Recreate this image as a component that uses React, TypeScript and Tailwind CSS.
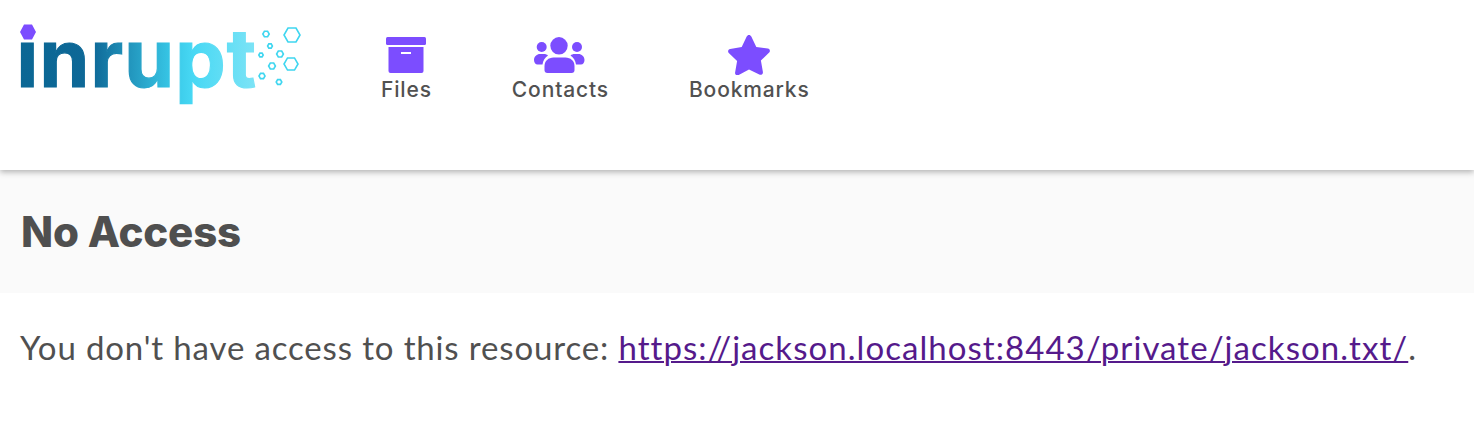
import React from "react";

function Hex({ cx, cy, r, w = 1.6 }: { cx: number; cy: number; r: number; w?: number }) {
  const pts = [0, 1, 2, 3, 4, 5]
    .map((i) => {
      const a = (Math.PI / 3) * i;
      return `${(cx + r * Math.cos(a)).toFixed(2)},${(cy + r * Math.sin(a)).toFixed(2)}`;
    })
    .join(" ");
  return <polygon points={pts} fill="none" stroke="#3fd6f0" strokeWidth={w} />;
}

function Logo() {
  return (
    <svg width="288" height="100" viewBox="-4 -14 288 100" className="block">
      <defs>
        <linearGradient id="g" gradientUnits="userSpaceOnUse" x1="0" y1="0" x2="240" y2="0">
          <stop offset="0" stopColor="#0b6794" />
          <stop offset="0.3" stopColor="#0e6897" />
          <stop offset="0.62" stopColor="#36c4e4" />
          <stop offset="0.72" stopColor="#47d8f4" />
          <stop offset="1" stopColor="#80e4f6" />
        </linearGradient>
      </defs>
      <text
        x="-3.5"
        y="65"
        fill="url(#g)"
        stroke="url(#g)"
        strokeWidth="1.2"
        fontFamily="Inter, 'Liberation Sans', sans-serif"
        fontWeight="700"
        fontSize="80"
        letterSpacing="1.2"
      >
        inrupt
      </text>
      <rect x="-2" y="0" width="20" height="19.5" fill="#fff" />
      <polygon points="0,10 4,2.500 12,2.500 16,10 12,17.500 4,17.500" fill="#7c4dff" />
      <Hex cx={246} cy={12} r={3.2} />
      <Hex cx={272} cy={13} r={8} />
      <Hex cx={250} cy={24} r={2.4} />
      <Hex cx={260} cy={32} r={3.4} />
      <Hex cx={241} cy={33} r={2.2} />
      <Hex cx={271} cy={42} r={7} />
      <Hex cx={252} cy={44} r={3.4} />
      <Hex cx={242} cy={54} r={3} />
      <Hex cx={259} cy={60} r={2.8} />
    </svg>
  );
}

function ArchiveIcon() {
  return (
    <svg width="40" height="36" viewBox="0 0 40 36" className="block">
      <rect x="0" y="0" width="40" height="8" rx="1.5" fill="#7c4dff" />
      <path d="M2.500 10h35v24a2 2 0 0 1-2 2h-31a2 2 0 0 1-2-2z" fill="#7c4dff" />
      <rect x="15" y="15" width="10" height="2" fill="#fff" />
    </svg>
  );
}

function UsersIcon() {
  return (
    <svg width="51" height="36" viewBox="0 0 51 36" className="block" fill="#7c4dff">
      <circle cx="25" cy="8.800" r="8.700" />
      <circle cx="7.700" cy="10" r="5" />
      <circle cx="43" cy="10" r="5" />
      <path d="M10.500 33v-4c0-5 4-8.500 9-8.500h12c5 0 9 3.500 9 8.500v4a3 3 0 0 1-3 3h-24a3 3 0 0 1-3-3z" />
      <path d="M0 23c0-3.500 3-6 6-6h4c1.500 0 3 .5 4 1.500-3 2-5 5-5.500 9H3.500C1.500 27.500 0 25.500 0 23z" />
      <path d="M50.500 23c0-3.500-3-6-6-6h-4c-1.500 0-3 .5-4 1.500 3 2 5 5 5.500 9H47C49 27.500 50.500 25.500 50.500 23z" />
    </svg>
  );
}

function StarIcon() {
  return (
    <svg width="42" height="40" viewBox="0 0 42 40" className="block" fill="#7c4dff">
      <path d="M21 0c1 0 1.800.6 2.300 1.600l5 10.400 11.500 1.600c2 .3 2.800 2.600 1.400 4l-8.300 8 2 11.400c.3 2-1.800 3.500-3.600 2.500L21 34.600l-10.300 5.400c-1.800 1-3.900-.5-3.600-2.500l2-11.400-8.300-8c-1.400-1.400-.6-3.700 1.400-4L13.700 12l5-10.400C19.200.6 20 0 21 0z" />
    </svg>
  );
}

function NavItem({ icon, label }: { icon: React.ReactNode; label: string }) {
  return (
    <a className="flex flex-col items-center">
      <div className="flex h-[40px] items-center pr-[1px]">{icon}</div>
      <span className="mt-[2px] text-[21px] leading-[26px] font-[450] tracking-[0.85px] text-[#515151]">{label}</span>
    </a>
  );
}

export default function App() {
  return (
    <div className="h-[446px] overflow-hidden bg-white font-['Inter','Liberation_Sans',sans-serif]">
      <header className="relative z-10 flex h-[170px] items-start bg-white shadow-[0_2px_6px_rgba(0,0,0,0.3)]">
        <div className="ml-[16px] mt-[8px] w-[288px] shrink-0">
          <Logo />
        </div>
        <nav className="ml-[77px] mt-[35px] flex gap-[80px]">
          <NavItem icon={<ArchiveIcon />} label="Files" />
          <NavItem icon={<UsersIcon />} label="Contacts" />
          <NavItem icon={<StarIcon />} label="Bookmarks" />
        </nav>
      </header>
      <section className="flex h-[123px] items-center bg-[#fafafa] pl-[21px]">
        <h1 className="text-[42px] leading-none font-extrabold tracking-[-0.2px] text-[#4f4f4f]">No Access</h1>
      </section>
      <p className="px-[20px] pt-[34px] font-['Lato',sans-serif] text-[33px] leading-[40px] tracking-[0.85px] text-[#505050]">
        You don't have access to this resource:{" "}
        <a href="#" className="tracking-[1.05px] text-[#551a8b] underline decoration-2">
          https://jackson.localhost:8443/private/jackson.txt/
        </a>
        .
      </p>
    </div>
  );
}
